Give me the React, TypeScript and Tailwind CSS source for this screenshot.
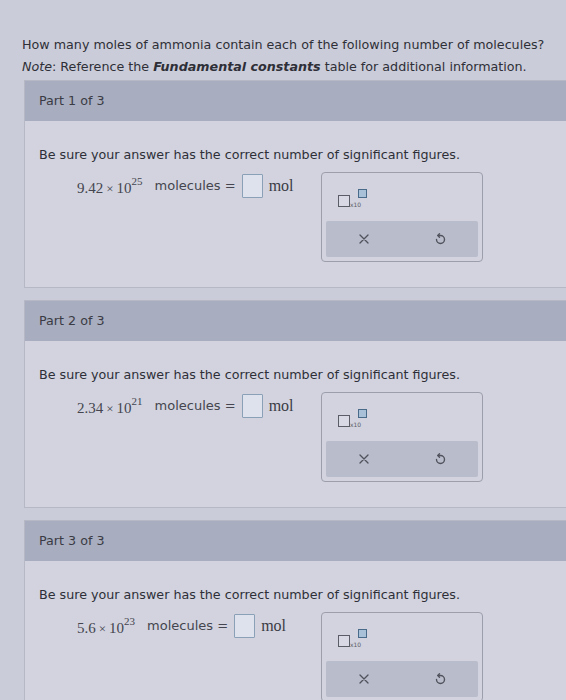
import React from 'react';

type Part = { n: number; coef: string; exp: string };

const parts: Part[] = [
  { n: 1, coef: '9.42', exp: '25' },
  { n: 2, coef: '2.34', exp: '21' },
  { n: 3, coef: '5.6', exp: '23' },
];

const sans = { fontFamily: '"DejaVu Sans", Verdana, sans-serif' };
const serif = { fontFamily: '"Liberation Serif", "Times New Roman", serif' };

const SciIcon = () => (
  <div className="flex items-end">
    <div className="w-[12px] h-[12px] border border-[#5a5c66] bg-[#d8d9e4]" />
    <span className="text-[6px] leading-none text-[#5a5c66] mb-[-1px]" style={sans}>x10</span>
    <div className="w-[9px] h-[9px] border border-[#4a6a8a] bg-[#a8c0d8] mb-[9px] -ml-[3px]" />
  </div>
);

const UndoIcon = () => (
  <svg width="14" height="14" viewBox="0 0 14 14" fill="none" stroke="#50525c" strokeWidth="1.4" strokeLinecap="round" strokeLinejoin="round">
    <path d="M5 3.5h2.5a4 4 0 1 1-4 4" />
    <path d="M6.5 1.8L4.8 3.5l1.7 1.7" />
  </svg>
);

const ToolBox = () => (
  <div className="mt-[4px] w-[162px] h-[90px] border border-[#9c9eab] rounded-[4px] bg-[#d2d3df] flex flex-col p-[4px]">
    <div className="h-[44px] pl-[12px] pt-[12px]">
      <SciIcon />
    </div>
    <div className="flex-1 bg-[#b9bccb] rounded-[2px] flex items-center justify-around">
      <svg width="12" height="12" viewBox="0 0 12 12" stroke="#50525c" strokeWidth="1.3" strokeLinecap="round">
        <path d="M2 2l8 8M10 2l-8 8" />
      </svg>
      <UndoIcon />
    </div>
  </div>
);

const PartCard = ({ p }: { p: Part }) => (
  <div className="border border-r-0 border-[#b6b8c6] bg-[#d2d3df] h-[208px] flex flex-col">
    <div className="h-[40px] bg-[#a8adbf] flex items-center pl-[14px] text-[12.7px] text-[#3a3b44]" style={sans}>
      Part {p.n} of 3
    </div>
    <div className="pl-[14px] pt-[24px] text-[12.7px] text-[#2e2f37]" style={sans}>
      Be sure your answer has the correct number of significant figures.
    </div>
    <div className="flex items-start mt-[4px]">
      <div className="flex items-center pl-[52px] pt-[6px] w-[296px]">
        <span className="flex items-start text-[15px] text-[#44454e] leading-none" style={serif}>
          <span className="mt-[4px]">{p.coef}</span>
          <span className="text-[13px] mx-[3px] mt-[5px]">×</span>
          <span className="mt-[4px]">10</span>
          <span className="text-[11px] -mt-[1px]">{p.exp}</span>
        </span>
        <span className="ml-[12px] text-[13px] text-[#44454e]" style={sans}>molecules =</span>
        <div className="ml-[6px] w-[21px] h-[24px] border border-[#8aa0b6] bg-[#dde2ec] rounded-[1px]" />
        <span className="ml-[6px] text-[16px] text-[#3a3b44]" style={serif}>mol</span>
      </div>
      <ToolBox />
    </div>
  </div>
);

export default function App() {
  return (
    <div className="w-[566px] h-[700px] overflow-hidden bg-[#cbccd9] pl-[24px]">
      <div className="pt-[34px] text-[12.7px] text-[#2e2f37] leading-[22px] -ml-[2px]" style={sans}>
        <div>How many moles of ammonia contain each of the following number of molecules?</div>
        <div>
          <i>Note</i>: Reference the <b><i>Fundamental constants</i></b> table for additional information.
        </div>
      </div>
      <div className="mt-[2px] flex flex-col gap-[12px]">
        {parts.map(p => (
          <PartCard key={p.n} p={p} />
        ))}
      </div>
    </div>
  );
}
